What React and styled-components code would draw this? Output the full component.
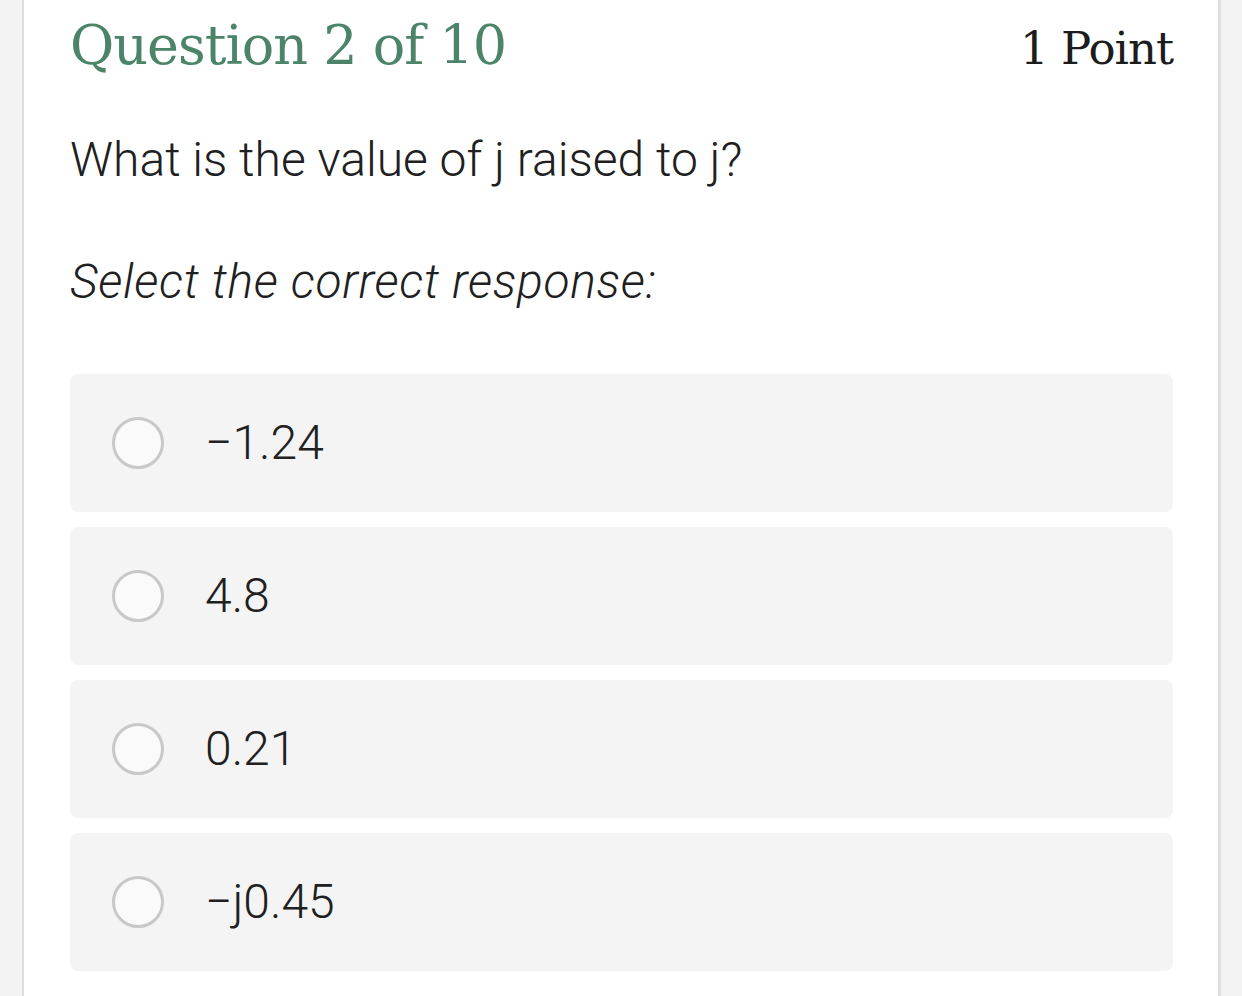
import React from "react";
import styled, { createGlobalStyle } from "styled-components";

const Global = createGlobalStyle`
  html, body { margin: 0; padding: 0; background: #f3f3f3; }
  body { font-family: Roboto, "Liberation Sans", sans-serif; }
`;

const Page = styled.div`
  width: 1242px;
  height: 996px;
  overflow: hidden;
  display: flex;
  background: #f3f3f3;
`;

const Card = styled.div`
  margin-left: 22px;
  width: 1199px;
  min-height: 996px;
  background: #ffffff;
  border-left: 2px solid #dedede;
  border-right: 3px solid #dedede;
  padding: 11px 45px 0 46px;
  box-sizing: border-box;
  display: flex;
  flex-direction: column;
`;

const Header = styled.div`
  display: flex;
  justify-content: space-between;
  align-items: baseline;
  height: 70px;
`;

const Title = styled.h1`
  margin: 0;
  font-family: "DejaVu Serif", "Liberation Serif", serif;
  font-weight: 400;
  font-size: 54px;
  line-height: 70px;
  color: #4b8468;
  letter-spacing: -1px;
`;

const Points = styled.div`
  font-family: "DejaVu Serif", "Liberation Serif", serif;
  font-size: 45px;
  line-height: 70px;
  color: #1c1c1c;
  letter-spacing: -1px;
`;

const Prompt = styled.p`
  margin: 51px 0 0;
  font-family: Roboto, sans-serif;
  font-weight: 300;
  font-size: 48px;
  line-height: 56px;
  color: #202020;
`;

const Instruction = styled(Prompt)`
  margin-top: 66px;
  font-style: italic;
  letter-spacing: 0.7px;
`;

const Options = styled.div`
  margin-top: 64px;
  display: flex;
  flex-direction: column;
  gap: 15px;
`;

const Option = styled.label`
  display: flex;
  align-items: center;
  height: 138px;
  padding-left: 42px;
  gap: 41px;
  background: #f4f4f4;
  border-radius: 8px;
  cursor: pointer;
`;

const Radio = styled.span`
  width: 52px;
  height: 52px;
  box-sizing: border-box;
  border-radius: 50%;
  border: 3px solid #c8c8c8;
  background: #fafafa;
  flex-shrink: 0;
`;

const OptionText = styled.span`
  font-family: Roboto, sans-serif;
  font-weight: 300;
  font-size: 48px;
  line-height: 56px;
  color: #202020;
`;

const choices = ["−1.24", "4.8", "0.21", "−j0.45"];

export default function App() {
  return (
    <Page>
      <Global />
      <Card>
        <Header>
          <Title>Question 2 of 10</Title>
          <Points>1 Point</Points>
        </Header>
        <Prompt>What is the value of j raised to j?</Prompt>
        <Instruction>Select the correct response:</Instruction>
        <Options>
          {choices.map((c) => (
            <Option key={c}>
              <Radio />
              <OptionText>{c}</OptionText>
            </Option>
          ))}
        </Options>
      </Card>
    </Page>
  );
}
